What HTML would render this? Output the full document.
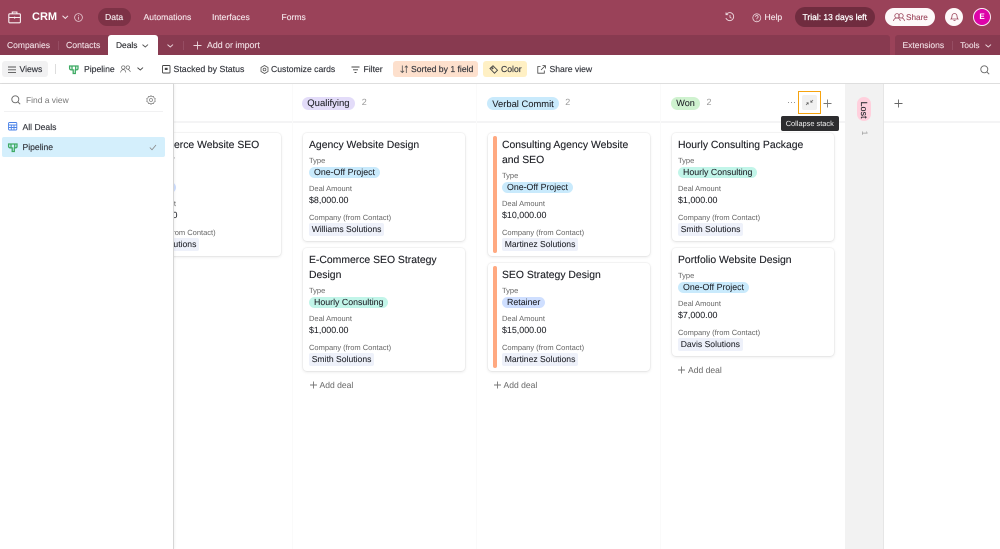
<!DOCTYPE html>
<html><head><meta charset="utf-8"><style>
html,body{margin:0;padding:0;width:1000px;height:549px;overflow:hidden;background:#fff;font-family:"Liberation Sans",sans-serif;color:#1d1f25;text-rendering:geometricPrecision}
#w{position:absolute;left:0;top:0;width:1000px;height:549px;overflow:hidden;filter:blur(.3px)}
.a{position:absolute;white-space:nowrap}
.top{color:#f6e9ed;font-size:8.6px;line-height:11px;-webkit-text-stroke:.1px #f6e9ed}
.tb{color:#33353c;font-size:8.65px;line-height:11px;-webkit-text-stroke:.15px #33353c}
.card{position:absolute;width:162px;background:#fff;border-radius:4px;box-shadow:0 0 0 1px rgba(0,0,0,.035),0 1px 3px rgba(0,0,0,.1)}
.card .t{position:absolute;left:6px;font-size:10.4px;line-height:15px;color:#1d1f25;white-space:nowrap;-webkit-text-stroke:.12px #1d1f25}
.card .l{position:absolute;left:6px;font-size:7.5px;color:#666;white-space:nowrap;line-height:9px}
.card .v{position:absolute;left:6px;font-size:8.9px;color:#1d1f25;white-space:nowrap;line-height:11px;-webkit-text-stroke:.06px #1d1f25}
.pill{position:absolute;left:6px;height:11px;line-height:11px;border-radius:6px;padding:0 5px;font-size:8.8px;white-space:nowrap;color:#1d1f25;-webkit-text-stroke:.06px #1d1f25}
.co{position:absolute;left:6px;height:12.5px;line-height:12.5px;border-radius:2px;padding:0 2.7px;font-size:8.6px;background:#eef1fa;white-space:nowrap;-webkit-text-stroke:.06px #1d1f25}
.bar{position:absolute;left:5px;top:3px;bottom:3px;width:4px;border-radius:2px;background:#ffa981}
.add{position:absolute;color:#666;font-size:8.55px;line-height:11px;white-space:nowrap}
.cnt{position:absolute;color:#999;font-size:9px;line-height:11px}
.hp{position:absolute;top:97px;height:13px;line-height:13px;border-radius:7px;padding:0 5.3px;font-size:9.4px;color:#1d1f25;-webkit-text-stroke:.06px #1d1f25}
svg{position:absolute;overflow:visible}
</style></head><body><div id="w">
<!-- top bar -->
<div class="a" style="left:0;top:0;width:1000px;height:55px;background:#9a4259"></div>
<div class="a" style="left:0;top:35px;width:890px;height:20px;background:#883a50;border-radius:0 3px 0 0"></div>
<div class="a" style="left:895px;top:35px;width:105px;height:20px;background:#883a50;border-radius:3px 0 0 0"></div>
<svg style="left:8px;top:11px" width="14" height="13" fill="none" stroke="#f8eef1" stroke-width="1.1"><rect x=".8" y="2.8" width="11.6" height="9" rx="1"/><path d="M4.3 2.800V1h4.600v1.800M.8 6.500h11.600M6.600 5.600v2"/></svg>
<div class="a" style="left:32px;top:10px;font-size:11px;font-weight:bold;color:#fff;line-height:15px">CRM</div>
<svg style="left:62px;top:15px" width="7" height="5" fill="none" stroke="#f3e3e8" stroke-width="1"><path d="M.5 .8L3.300 3.400 6 .8"/></svg>
<svg style="left:74px;top:13px" width="9" height="9" fill="none" stroke="#e8cdd5" stroke-width=".8"><circle cx="4.500" cy="4.500" r="3.900"/><path d="M4.500 4v2.600M4.500 2.200v1"/></svg>
<div class="a" style="left:98px;top:8px;width:33px;height:18px;border-radius:9px;background:#7d3246"></div>
<div class="a top" style="left:105px;top:12px;color:#fff">Data</div>
<div class="a top" style="left:143.500px;top:12px">Automations</div>
<div class="a top" style="left:212px;top:12px">Interfaces</div>
<div class="a top" style="left:281.500px;top:12px">Forms</div>
<svg style="left:725px;top:12px" width="10" height="10" fill="none" stroke="#ecd8de" stroke-width=".9"><path d="M1.200 2.600A4 4 0 1 1 .9 6M1 .5v2.200h2.200M5 3v2.300l1.500 1"/></svg>
<svg style="left:752px;top:12.500px" width="10" height="10" fill="none" stroke="#ecd8de" stroke-width=".8"><circle cx="4.800" cy="4.800" r="4"/><path d="M3.500 3.800a1.300 1.300 0 1 1 1.700 1.300c-.3.100-.4.400-.4.800M4.800 6.800v.6"/></svg>
<div class="a top" style="left:764.500px;top:12px">Help</div>
<div class="a" style="left:795px;top:7px;width:80px;height:20px;border-radius:10px;background:#702c3f"></div>
<div class="a" style="left:802.500px;top:12px;line-height:11px;font-size:8.500px;color:#fff;-webkit-text-stroke:.25px #fff">Trial: 13 days left</div>
<div class="a" style="left:885px;top:8px;width:50px;height:18px;border-radius:9px;background:#fdf8f9"></div>
<svg style="left:893px;top:13px" width="12" height="9" fill="none" stroke="#9a4259" stroke-width=".8"><circle cx="4" cy="2.800" r="2.200"/><circle cx="8" cy="2.800" r="2.200"/><path d="M.5 8c.3-2 1.700-3 3.500-3s3 1 3.300 3M8.500 5c1.500 0 2.600 1 3 3"/></svg>
<div class="a" style="left:906px;top:12px;line-height:11px;font-size:8.200px;color:#9a4259;-webkit-text-stroke:.1px #9a4259">Share</div>
<div class="a" style="left:945px;top:8px;width:18px;height:18px;border-radius:50%;background:#fdf8f9"></div>
<svg style="left:949.500px;top:12px" width="9" height="10" fill="none" stroke="#9a4259" stroke-width=".8"><path d="M1 7c.8-.8 1-1.400 1-3a2.500 2.500 0 0 1 5 0c0 1.600.2 2.200 1 3zM3.500 8.500h2"/></svg>
<div class="a" style="left:973px;top:8px;width:16px;height:16px;border-radius:50%;background:#dd04a8;border:1px solid #fbeaf3;text-align:center;color:#fff;font-size:8px;line-height:16px;font-weight:bold">E</div>
<!-- tabs -->
<div class="a top" style="left:7px;top:40px;font-size:8.500px;color:#f0dde3">Companies</div>
<div class="a" style="left:57.500px;top:41px;width:1px;height:9px;background:#964d63"></div>
<div class="a top" style="left:66px;top:40px;color:#f0dde3;font-size:8.700px">Contacts</div>
<div class="a" style="left:108px;top:35px;width:50px;height:20px;background:#fff;border-radius:3px 3px 0 0"></div>
<div class="a" style="left:116px;top:40px;line-height:11px;font-size:8.400px;color:#26272c;-webkit-text-stroke:.12px #26272c">Deals</div>
<svg style="left:142px;top:43.500px" width="7" height="5" fill="none" stroke="#555" stroke-width=".9"><path d="M.5 .6L3.300 3 6 .6"/></svg>
<svg style="left:167px;top:43.500px" width="7" height="5" fill="none" stroke="#ecd8de" stroke-width=".9"><path d="M.5 .6L3.300 3 6 .6"/></svg>
<div class="a" style="left:183px;top:41px;width:1px;height:9px;background:#964d63"></div>
<svg style="left:193px;top:41px" width="9" height="9" fill="none" stroke="#ecd8de" stroke-width=".9"><path d="M4.500 .5v8M.5 4.500h8"/></svg>
<div class="a top" style="left:207px;top:40px;color:#f0dde3;font-size:8.800px">Add or import</div>
<div class="a top" style="left:902.500px;top:40px;font-size:8.500px;color:#f0dde3">Extensions</div>
<div class="a" style="left:951.500px;top:41px;width:1px;height:9px;background:#964d63"></div>
<div class="a top" style="left:960.300px;top:40px;font-size:8.200px;color:#f0dde3">Tools</div>
<svg style="left:985px;top:43.500px" width="7" height="5" fill="none" stroke="#ecd8de" stroke-width=".9"><path d="M.5 .6L3.300 3 6 .6"/></svg>
<!-- toolbar -->
<div class="a" style="left:0;top:83px;width:1000px;height:1px;background:#dedede"></div>
<div class="a" style="left:2px;top:61px;width:46px;height:16px;border-radius:3px;background:#f1f1f2"></div>
<svg style="left:8px;top:65.500px" width="9" height="8" fill="none" stroke="#555" stroke-width=".9"><path d="M0 1h8M0 3.800h8M0 6.600h8"/></svg>
<div class="a tb" style="left:19.500px;top:64px">Views</div>
<div class="a" style="left:55px;top:64px;width:1px;height:10px;background:#ddd"></div>
<svg style="left:69px;top:64.500px" width="10" height="10" fill="none" stroke="#3daa63" stroke-width="1.300"><path d="M.6 1h8.400v2.400c0 1-.8 1.500-1.700 1.500H6.300V8.500H4.200V4.900H2.300C1.400 4.900.6 4.400.6 3.400z"/><path d="M3 1v3.500M6.700 1v3.500"/></svg>
<div class="a tb" style="left:84px;top:64px">Pipeline</div>
<svg style="left:120px;top:65px" width="11" height="9" fill="none" stroke="#666" stroke-width=".7"><circle cx="3.300" cy="2.500" r="1.700"/><circle cx="7.800" cy="2.500" r="1.700"/><path d="M.6 7.500c.3-1.800 1.300-2.800 2.700-2.800s2.300 1 2.500 2.800M7.800 4.700c1.300 0 2.200.8 2.500 2.300"/></svg>
<svg style="left:137px;top:67px" width="7" height="5" fill="none" stroke="#444" stroke-width=".9"><path d="M.5 .6L3.300 3 6 .6"/></svg>
<svg style="left:162px;top:65px" width="9" height="9" fill="none" stroke="#444" stroke-width=".9"><rect x=".5" y=".5" width="7.500" height="7.500" rx=".8"/><rect x="2.800" y="2.800" width="2.800" height="2.200" fill="#444" stroke="none"/></svg>
<div class="a tb" style="left:173.500px;top:64px;font-size:8.800px">Stacked by Status</div>
<svg style="left:260px;top:65px" width="9" height="9" fill="none" stroke="#555" stroke-width=".8"><path d="M4.500 .5l3.500 2v4l-3.500 2-3.500-2v-4z"/><circle cx="4.500" cy="4.500" r="1.400"/></svg>
<div class="a tb" style="left:271px;top:64px">Customize cards</div>
<svg style="left:351px;top:66px" width="10" height="8" fill="none" stroke="#444" stroke-width=".9"><path d="M.5 1h8M2 3.800h5M3.500 6.500h2"/></svg>
<div class="a tb" style="left:363.500px;top:64px">Filter</div>
<div class="a" style="left:393px;top:61px;width:85px;height:16px;border-radius:3px;background:#fde0cd"></div>
<svg style="left:399.500px;top:65px" width="9" height="9" fill="none" stroke="#555" stroke-width=".8"><path d="M2.300 .5v7M.5 5.800l1.800 1.800 1.800-1.800M6.300 8V1M4.800 2.500l1.500-1.700 1.500 1.700"/></svg>
<div class="a tb" style="left:411px;top:64px">Sorted by 1 field</div>
<div class="a" style="left:483px;top:61px;width:44px;height:16px;border-radius:3px;background:#fff0c4"></div>
<svg style="left:488.500px;top:64.500px" width="10" height="10" fill="none" stroke="#444" stroke-width=".9"><path d="M1 3.500L4 .8l4.500 4.400-3 3z"/><circle cx="3.500" cy="3.300" r=".6"/></svg>
<div class="a tb" style="left:501px;top:64px">Color</div>
<svg style="left:537px;top:65px" width="9" height="9" fill="none" stroke="#444" stroke-width=".8"><path d="M3.500 1.500H.8v6.700h6.500V5.500M4 5l4-4M5.500.6h2.900v2.900"/></svg>
<div class="a tb" style="left:549.500px;top:64px">Share view</div>
<svg style="left:980px;top:64.500px" width="10" height="10" fill="none" stroke="#666" stroke-width=".9"><circle cx="4.300" cy="4.300" r="3.500"/><path d="M6.900 6.900l2.300 2.300"/></svg>
<!-- board -->
<div class="a" style="left:173px;top:121px;width:827px;height:2px;background:#f4f4f5"></div>
<div class="a" style="left:292px;top:84px;width:1px;height:465px;background:#fafafa"></div>
<div class="a" style="left:476px;top:84px;width:1px;height:465px;background:#fafafa"></div>
<div class="a" style="left:660px;top:84px;width:1px;height:465px;background:#fafafa"></div>
<div class="a" style="left:845px;top:84px;width:38px;height:465px;background:#f2f2f2"></div>
<div class="a" style="left:883px;top:84px;width:1px;height:465px;background:#e6e6e6"></div>
<div class="hp" style="left:302px;background:#e3dcf9;font-size:9.500px">Qualifying</div><div class="cnt" style="left:361.700px;top:97px">2</div>
<div class="hp" style="left:487px;background:#c9eafc">Verbal Commit</div><div class="cnt" style="left:565.300px;top:97px">2</div>
<div class="hp" style="left:671px;background:#cff2cf;font-size:9.100px">Won</div><div class="cnt" style="left:706.500px;top:97px">2</div>
<div class="a" style="left:787px;top:97px;font-size:9px;color:#777;line-height:10px">···</div>
<div class="a" style="left:802.300px;top:95px;width:14.500px;height:15px;border-radius:2px;background:#f0f0f0"></div>
<div class="a" style="left:798px;top:91px;width:23.300px;height:23.300px;border:1.700px solid #f6a30f;box-sizing:border-box"></div>
<svg style="left:805px;top:99px" width="9" height="7" fill="none" stroke="#666" stroke-width=".8"><path d="M1 6L3 4M1.500 3.800H3.200V5.500M8 1L6 3M7.500 3.200H5.800V1.500"/></svg>
<svg style="left:823px;top:98.500px" width="9" height="9" fill="none" stroke="#777" stroke-width=".9"><path d="M4.500 .5v8M.5 4.500h8"/></svg>
<svg style="left:894px;top:98.500px" width="9" height="9" fill="none" stroke="#666" stroke-width=".9"><path d="M4.500 .5v8M.5 4.500h8"/></svg>
<div class="a" style="left:856.700px;top:96.700px;width:14.300px;height:24px;background:#ffd0dd;border-radius:7px"></div>
<div class="a" style="left:864px;top:109.500px;font-size:9px;line-height:10px;color:#1d1f25;-webkit-text-stroke:.1px #1d1f25;transform:translate(-50%,-50%) rotate(90deg)">Lost</div>
<div class="a" style="left:863.500px;top:133px;font-size:8px;line-height:10px;color:#999;transform:translate(-50%,-50%) rotate(90deg)">1</div>
<!-- cards -->
<div class="card" style="left:119px;top:133px;height:123px"><div class="bar"></div>
<div class="t" style="top:4.500px;left:14px">E-Commerce Website SEO</div><div class="t" style="top:19.500px;left:14px;letter-spacing:.4px">Strategy</div>
<div class="l" style="top:38px;left:14px">Type</div><div class="pill" style="top:49px;left:14px;background:#cfdfff">Retainer</div>
<div class="l" style="top:66px;left:14px">Deal Amount</div><div class="v" style="top:77px;left:14px">$20,000.00</div>
<div class="l" style="top:95px;left:14.500px">Company (from Contact)</div><div class="co" style="top:105px;left:14px">Jones Solutions</div>
</div>
<div class="card" style="left:303px;top:133px;height:108px">
<div class="t" style="top:4.500px">Agency Website Design</div>
<div class="l" style="top:23px">Type</div><div class="pill" style="top:34px;background:#c9eafc">One-Off Project</div>
<div class="l" style="top:51px">Deal Amount</div><div class="v" style="top:62px">$8,000.00</div>
<div class="l" style="top:80px">Company (from Contact)</div><div class="co" style="top:90px">Williams Solutions</div>
</div>
<div class="card" style="left:303px;top:248px;height:123px">
<div class="t" style="top:4.500px">E-Commerce SEO Strategy</div><div class="t" style="top:19.500px">Design</div>
<div class="l" style="top:38px">Type</div><div class="pill" style="top:49px;background:#c2f5e9">Hourly Consulting</div>
<div class="l" style="top:66px">Deal Amount</div><div class="v" style="top:77px">$1,000.00</div>
<div class="l" style="top:95px">Company (from Contact)</div><div class="co" style="top:105px">Smith Solutions</div>
</div>
<div class="add" style="left:308.500px;top:380px"><svg style="left:0;top:1px" width="9" height="9" fill="none" stroke="#777" stroke-width=".9"><path d="M4.500 .5v7M1 4h7"/></svg><span style="margin-left:11px">Add deal</span></div>
<div class="card" style="left:488px;top:133px;height:123px"><div class="bar"></div>
<div class="t" style="top:4.500px;left:14px">Consulting Agency Website</div><div class="t" style="top:19.500px;left:14px">and SEO</div>
<div class="l" style="top:38px;left:14px">Type</div><div class="pill" style="top:49px;left:14px;background:#c9eafc">One-Off Project</div>
<div class="l" style="top:66px;left:14px">Deal Amount</div><div class="v" style="top:77px;left:14px">$10,000.00</div>
<div class="l" style="top:95px;left:14px">Company (from Contact)</div><div class="co" style="top:105px;left:14px">Martinez Solutions</div>
</div>
<div class="card" style="left:488px;top:263px;height:108px"><div class="bar"></div>
<div class="t" style="top:4.500px;left:14px">SEO Strategy Design</div>
<div class="l" style="top:23px;left:14px">Type</div><div class="pill" style="top:34px;left:14px;background:#cfdfff">Retainer</div>
<div class="l" style="top:51px;left:14px">Deal Amount</div><div class="v" style="top:62px;left:14px">$15,000.00</div>
<div class="l" style="top:80px;left:14px">Company (from Contact)</div><div class="co" style="top:90px;left:14px">Martinez Solutions</div>
</div>
<div class="add" style="left:492.500px;top:380px"><svg style="left:0;top:1px" width="9" height="9" fill="none" stroke="#777" stroke-width=".9"><path d="M4.500 .5v7M1 4h7"/></svg><span style="margin-left:11px">Add deal</span></div>
<div class="card" style="left:672px;top:133px;height:108px">
<div class="t" style="top:4.500px">Hourly Consulting Package</div>
<div class="l" style="top:23px">Type</div><div class="pill" style="top:34px;background:#c2f5e9">Hourly Consulting</div>
<div class="l" style="top:51px">Deal Amount</div><div class="v" style="top:62px">$1,000.00</div>
<div class="l" style="top:80px">Company (from Contact)</div><div class="co" style="top:90px">Smith Solutions</div>
</div>
<div class="card" style="left:672px;top:248px;height:108px">
<div class="t" style="top:4.500px">Portfolio Website Design</div>
<div class="l" style="top:23px">Type</div><div class="pill" style="top:34px;background:#c9eafc">One-Off Project</div>
<div class="l" style="top:51px">Deal Amount</div><div class="v" style="top:62px">$7,000.00</div>
<div class="l" style="top:80px">Company (from Contact)</div><div class="co" style="top:90px">Davis Solutions</div>
</div>
<div class="add" style="left:677px;top:365px"><svg style="left:0;top:1px" width="9" height="9" fill="none" stroke="#777" stroke-width=".9"><path d="M4.500 .5v7M1 4h7"/></svg><span style="margin-left:11px">Add deal</span></div>
<!-- tooltip -->
<div class="a" style="left:780.500px;top:115.500px;width:58.500px;height:15px;background:#2d2d2f;border-radius:2px;color:#f2f2f2;font-size:7.400px;line-height:15px;text-align:center">Collapse stack</div>
<!-- sidebar -->
<div class="a" style="left:0;top:84px;width:174px;height:465px;background:#fff;border-right:1px solid #d6d6d6;box-sizing:border-box;box-shadow:1px 0 2px rgba(0,0,0,.05)"></div>
<svg style="left:11px;top:95px" width="10" height="10" fill="none" stroke="#666" stroke-width=".9"><circle cx="4.300" cy="4.300" r="3.500"/><path d="M6.900 6.900l2.300 2.300"/></svg>
<div class="a" style="left:26px;top:95px;line-height:11px;font-size:8.450px;color:#777">Find a view</div>
<svg style="left:145.500px;top:94.500px" width="10" height="10" fill="none" stroke="#888" stroke-width=".8"><path d="M5 .6l1 1.100 1.500-.2.500 1.400 1.300.8-.5 1.300.5 1.300-1.300.8-.5 1.400-1.500-.2-1 1.100-1-1.100-1.500.2-.5-1.400L.7 6.300l.5-1.300L.7 3.700 2 2.900l.5-1.400 1.500.2z"/><circle cx="5" cy="5" r="1.500"/></svg>
<div class="a" style="left:4px;top:111px;width:159px;height:1px;background:#f1f1f2"></div>
<svg style="left:7.500px;top:122px" width="10" height="9" fill="none" stroke="#4b83e8" stroke-width=".9"><rect x=".5" y=".5" width="8.300" height="7.500" rx="1"/><path d="M.5 3h8.300M.5 5.500h8.300M3.300 3v5M6 3v5"/></svg>
<div class="a" style="left:22.500px;top:122px;line-height:11px;font-size:8.600px;color:#33353c;-webkit-text-stroke:.15px #33353c">All Deals</div>
<div class="a" style="left:2px;top:137.300px;width:163px;height:20px;border-radius:2px;background:#d4effc"></div>
<svg style="left:7.500px;top:142.500px" width="10" height="10" fill="none" stroke="#3daa63" stroke-width="1.300"><path d="M.6 1h8.400v2.400c0 1-.8 1.500-1.700 1.500H6.300V8.500H4.200V4.900H2.300C1.400 4.900.6 4.400.6 3.400z"/><path d="M3 1v3.500M6.700 1v3.500"/></svg>
<div class="a" style="left:22.500px;top:142px;line-height:11px;font-size:8.600px;color:#33353c;-webkit-text-stroke:.15px #33353c">Pipeline</div>
<svg style="left:149px;top:144px" width="8" height="7" fill="none" stroke="#888" stroke-width=".8"><path d="M.8 3.500L3 5.800 7 1"/></svg>
</div></body></html>
